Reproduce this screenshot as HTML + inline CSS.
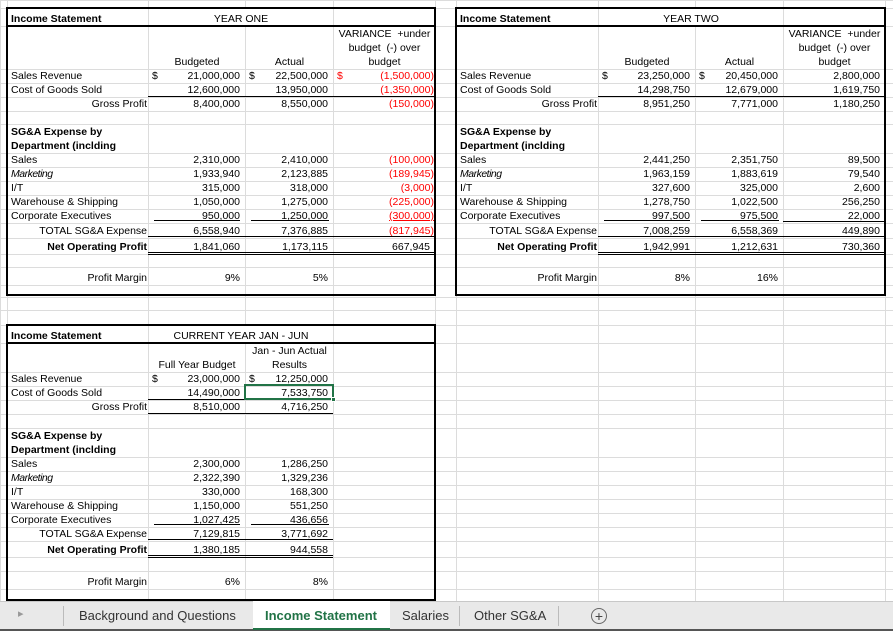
<!DOCTYPE html>
<html><head><meta charset="utf-8"><style>
*{margin:0;padding:0;box-sizing:border-box}
body{width:893px;height:631px;overflow:hidden;background:#fff;font-family:"Liberation Sans",Tahoma,sans-serif;font-size:10.5px;color:#000;position:relative}
table{position:absolute;left:0;top:0;border-collapse:collapse;table-layout:fixed;width:905px}
td{border:1px solid #dcdcdc;padding:0 3px;white-space:nowrap;overflow:hidden;vertical-align:bottom;line-height:13px}
.r{text-align:right;padding-right:5px}
.n{text-align:right;padding-right:1px;color:#f00}
.c{text-align:center}
.b{font-weight:bold}
.i{font-style:italic;letter-spacing:-.5px}
.d{float:left}
.k{position:absolute;background:#000}
.bx{position:absolute;border:2px solid #000}
.tabs{position:absolute;left:0;top:601px;width:893px;height:30px;background:#e9e9e9;border-top:1px solid #c8c8c8;border-bottom:2px solid #555;font-size:13px;color:#333}
.tabs span{position:absolute;top:6px}
.sep{position:absolute;top:4px;width:1px;height:20px;background:#bbb}
</style></head><body>
<table>
<colgroup><col style="width:7px"><col style="width:141px"><col style="width:97px"><col style="width:88px"><col style="width:102px"><col style="width:21px"><col style="width:142px"><col style="width:97px"><col style="width:88px"><col style="width:102px"><col style="width:20px"></colgroup>
<tr style="height:8px"><td></td><td></td><td></td><td></td><td></td><td></td><td></td><td></td><td></td><td></td><td></td></tr>
<tr style="height:18px"><td></td><td class="b">Income Statement</td><td colspan="2" class="c">YEAR ONE</td><td></td><td></td><td class="b">Income Statement</td><td colspan="2" class="c">YEAR TWO</td><td></td><td></td></tr>
<tr style="height:42px"><td></td><td></td><td class="c">Budgeted</td><td class="c">Actual</td><td class="c" style="white-space:normal;line-height:14px">VARIANCE &nbsp;+under budget &nbsp;(-) over budget</td><td></td><td></td><td class="c">Budgeted</td><td class="c">Actual</td><td class="c" style="white-space:normal;line-height:14px">VARIANCE &nbsp;+under budget &nbsp;(-) over budget</td><td></td></tr>
<tr style="height:14px"><td></td><td>Sales Revenue</td><td class="r"><span class="d">$</span>21,000,000</td><td class="r"><span class="d">$</span>22,500,000</td><td class="n"><span class="d">$</span>(1,500,000)</td><td></td><td>Sales Revenue</td><td class="r"><span class="d">$</span>23,250,000</td><td class="r"><span class="d">$</span>20,450,000</td><td class="r">2,800,000</td><td></td></tr>
<tr style="height:14px"><td></td><td>Cost of Goods Sold</td><td class="r">12,600,000</td><td class="r">13,950,000</td><td class="n">(1,350,000)</td><td></td><td>Cost of Goods Sold</td><td class="r">14,298,750</td><td class="r">12,679,000</td><td class="r">1,619,750</td><td></td></tr>
<tr style="height:14px"><td></td><td class="r" style="padding-right:1px">Gross Profit</td><td class="r">8,400,000</td><td class="r">8,550,000</td><td class="n">(150,000)</td><td></td><td class="r" style="padding-right:1px">Gross Profit</td><td class="r">8,951,250</td><td class="r">7,771,000</td><td class="r">1,180,250</td><td></td></tr>
<tr style="height:13px"><td></td><td></td><td></td><td></td><td></td><td></td><td></td><td></td><td></td><td></td><td></td></tr>
<tr style="height:28px"><td></td><td class="b" style="line-height:14px">SG&amp;A Expense by<br>Department (inclding</td><td></td><td></td><td></td><td></td><td class="b" style="line-height:14px">SG&amp;A Expense by<br>Department (inclding</td><td></td><td></td><td></td><td></td></tr>
<tr style="height:14px"><td></td><td>Sales</td><td class="r">2,310,000</td><td class="r">2,410,000</td><td class="n">(100,000)</td><td></td><td>Sales</td><td class="r">2,441,250</td><td class="r">2,351,750</td><td class="r">89,500</td><td></td></tr>
<tr style="height:14px"><td></td><td class="i">Marketing</td><td class="r">1,933,940</td><td class="r">2,123,885</td><td class="n">(189,945)</td><td></td><td class="i">Marketing</td><td class="r">1,963,159</td><td class="r">1,883,619</td><td class="r">79,540</td><td></td></tr>
<tr style="height:14px"><td></td><td>I/T</td><td class="r">315,000</td><td class="r">318,000</td><td class="n">(3,000)</td><td></td><td>I/T</td><td class="r">327,600</td><td class="r">325,000</td><td class="r">2,600</td><td></td></tr>
<tr style="height:14px"><td></td><td>Warehouse &amp; Shipping</td><td class="r">1,050,000</td><td class="r">1,275,000</td><td class="n">(225,000)</td><td></td><td>Warehouse &amp; Shipping</td><td class="r">1,278,750</td><td class="r">1,022,500</td><td class="r">256,250</td><td></td></tr>
<tr style="height:14px"><td></td><td>Corporate Executives</td><td class="r">950,000</td><td class="r">1,250,000</td><td class="n" style="text-decoration:underline">(300,000)</td><td></td><td>Corporate Executives</td><td class="r">997,500</td><td class="r">975,500</td><td class="r">22,000</td><td></td></tr>
<tr style="height:15px"><td></td><td class="r" style="padding-right:1px">TOTAL SG&amp;A Expense</td><td class="r">6,558,940</td><td class="r">7,376,885</td><td class="n">(817,945)</td><td></td><td class="r" style="padding-right:1px">TOTAL SG&amp;A Expense</td><td class="r">7,008,259</td><td class="r">6,558,369</td><td class="r">449,890</td><td></td></tr>
<tr style="height:16px"><td></td><td class="r b" style="padding-right:1px">Net Operating Profit</td><td class="r">1,841,060</td><td class="r">1,173,115</td><td class="r">667,945</td><td></td><td class="r b" style="padding-right:1px">Net Operating Profit</td><td class="r">1,942,991</td><td class="r">1,212,631</td><td class="r">730,360</td><td></td></tr>
<tr style="height:13px"><td></td><td></td><td></td><td></td><td></td><td></td><td></td><td></td><td></td><td></td><td></td></tr>
<tr style="height:18px"><td></td><td class="r" style="padding-right:1px">Profit Margin</td><td class="r">9%</td><td class="r">5%</td><td></td><td></td><td class="r" style="padding-right:1px">Profit Margin</td><td class="r">8%</td><td class="r">16%</td><td></td><td></td></tr>
<tr style="height:12px"><td></td><td></td><td></td><td></td><td></td><td></td><td></td><td></td><td></td><td></td><td></td></tr>
<tr style="height:13px"><td></td><td></td><td></td><td></td><td></td><td></td><td></td><td></td><td></td><td></td><td></td></tr>
<tr style="height:15px"><td></td><td></td><td></td><td></td><td></td><td></td><td></td><td></td><td></td><td></td><td></td></tr>
<tr style="height:18px"><td></td><td class="b">Income Statement</td><td colspan="2" class="c">CURRENT YEAR JAN - JUN</td><td></td><td></td><td></td><td></td><td></td><td></td><td></td></tr>
<tr style="height:28px"><td></td><td></td><td class="c">Full Year Budget</td><td class="c" style="line-height:14px">Jan - Jun Actual<br>Results</td><td></td><td></td><td></td><td></td><td></td><td></td><td></td></tr>
<tr style="height:14px"><td></td><td>Sales Revenue</td><td class="r"><span class="d">$</span>23,000,000</td><td class="r"><span class="d">$</span>12,250,000</td><td></td><td></td><td></td><td></td><td></td><td></td><td></td></tr>
<tr style="height:14px"><td></td><td>Cost of Goods Sold</td><td class="r">14,490,000</td><td class="r">7,533,750</td><td></td><td></td><td></td><td></td><td></td><td></td><td></td></tr>
<tr style="height:14px"><td></td><td class="r" style="padding-right:1px">Gross Profit</td><td class="r">8,510,000</td><td class="r">4,716,250</td><td></td><td></td><td></td><td></td><td></td><td></td><td></td></tr>
<tr style="height:14px"><td></td><td></td><td></td><td></td><td></td><td></td><td></td><td></td><td></td><td></td><td></td></tr>
<tr style="height:28px"><td></td><td class="b" style="line-height:14px">SG&amp;A Expense by<br>Department (inclding</td><td></td><td></td><td></td><td></td><td></td><td></td><td></td><td></td><td></td></tr>
<tr style="height:14px"><td></td><td>Sales</td><td class="r">2,300,000</td><td class="r">1,286,250</td><td></td><td></td><td></td><td></td><td></td><td></td><td></td></tr>
<tr style="height:14px"><td></td><td class="i">Marketing</td><td class="r">2,322,390</td><td class="r">1,329,236</td><td></td><td></td><td></td><td></td><td></td><td></td><td></td></tr>
<tr style="height:14px"><td></td><td>I/T</td><td class="r">330,000</td><td class="r">168,300</td><td></td><td></td><td></td><td></td><td></td><td></td><td></td></tr>
<tr style="height:14px"><td></td><td>Warehouse &amp; Shipping</td><td class="r">1,150,000</td><td class="r">551,250</td><td></td><td></td><td></td><td></td><td></td><td></td><td></td></tr>
<tr style="height:14px"><td></td><td>Corporate Executives</td><td class="r">1,027,425</td><td class="r">436,656</td><td></td><td></td><td></td><td></td><td></td><td></td><td></td></tr>
<tr style="height:14px"><td></td><td class="r" style="padding-right:1px">TOTAL SG&amp;A Expense</td><td class="r">7,129,815</td><td class="r">3,771,692</td><td></td><td></td><td></td><td></td><td></td><td></td><td></td></tr>
<tr style="height:16px"><td></td><td class="r b" style="padding-right:1px">Net Operating Profit</td><td class="r">1,380,185</td><td class="r">944,558</td><td></td><td></td><td></td><td></td><td></td><td></td><td></td></tr>
<tr style="height:14px"><td></td><td></td><td></td><td></td><td></td><td></td><td></td><td></td><td></td><td></td><td></td></tr>
<tr style="height:18px"><td></td><td class="r" style="padding-right:1px">Profit Margin</td><td class="r">6%</td><td class="r">8%</td><td></td><td></td><td></td><td></td><td></td><td></td><td></td></tr>
<tr style="height:14px"><td></td><td></td><td></td><td></td><td></td><td></td><td></td><td></td><td></td><td></td><td></td></tr>
</table>

<!-- box 1 -->
<div class="bx" style="left:6px;top:7px;width:430px;height:289px"></div>
<div class="k" style="left:6px;top:25px;width:430px;height:2px"></div>
<div class="k" style="left:148px;top:96px;width:287px;height:1px"></div>
<div class="k" style="left:154px;top:220px;width:86px;height:1px"></div>
<div class="k" style="left:251px;top:220px;width:78px;height:1px"></div>
<div class="k" style="left:148px;top:236px;width:287px;height:1px"></div>
<div class="k" style="left:148px;top:252px;width:287px;height:1px"></div>
<div class="k" style="left:148px;top:254px;width:287px;height:1px"></div>
<!-- box 2 -->
<div class="bx" style="left:455px;top:7px;width:431px;height:289px"></div>
<div class="k" style="left:455px;top:25px;width:431px;height:2px"></div>
<div class="k" style="left:598px;top:96px;width:287px;height:1px"></div>
<div class="k" style="left:604px;top:220px;width:86px;height:1px"></div>
<div class="k" style="left:701px;top:220px;width:78px;height:1px"></div>
<div class="k" style="left:783px;top:221px;width:102px;height:1px"></div>
<div class="k" style="left:598px;top:236px;width:287px;height:1px"></div>
<div class="k" style="left:598px;top:252px;width:287px;height:1px"></div>
<div class="k" style="left:598px;top:254px;width:287px;height:1px"></div>
<!-- box 3 -->
<div class="bx" style="left:6px;top:324px;width:430px;height:277px"></div>
<div class="k" style="left:6px;top:342px;width:430px;height:2px"></div>
<div class="k" style="left:148px;top:399px;width:185px;height:1px"></div>
<div class="k" style="left:148px;top:413px;width:185px;height:1px"></div>
<div class="k" style="left:154px;top:524px;width:86px;height:1px"></div>
<div class="k" style="left:251px;top:524px;width:78px;height:1px"></div>
<div class="k" style="left:148px;top:539px;width:185px;height:1px"></div>
<div class="k" style="left:148px;top:555px;width:185px;height:1px"></div>
<div class="k" style="left:148px;top:557px;width:185px;height:1px"></div>
<div style="position:absolute;left:244px;top:384px;width:90px;height:16px;border:2px solid #217346"></div>
<div style="position:absolute;left:331px;top:397px;width:5px;height:5px;background:#217346;border:1px solid #fff"></div>

<div class="tabs">
<span style="left:18px;top:5px;color:#999;font-size:11px">&#9656;</span>
<div class="sep" style="left:63px"></div>
<span style="left:79px">Background and Questions</span>
<div style="position:absolute;left:253px;top:-1px;width:137px;height:29px;background:#fff;border-bottom:2px solid #217346"></div>
<span style="left:265px;color:#217346;font-weight:bold">Income Statement</span>
<span style="left:402px">Salaries</span>
<div class="sep" style="left:459px"></div>
<span style="left:474px">Other SG&amp;A</span>
<div class="sep" style="left:558px"></div>
<div style="position:absolute;left:591px;top:6px;width:16px;height:16px;border:1px solid #666;border-radius:50%;text-align:center;line-height:14px;font-size:14px;color:#444">+</div>
</div>
</body></html>
